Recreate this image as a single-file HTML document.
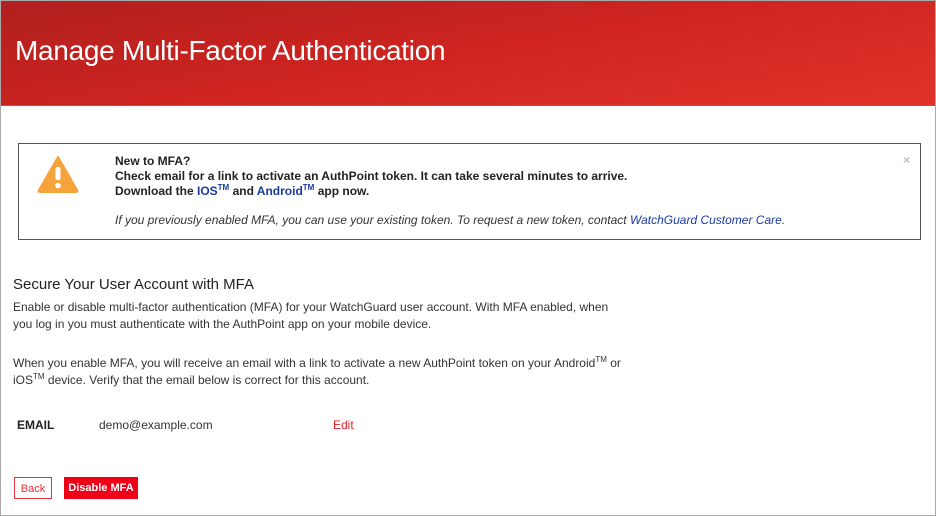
<!DOCTYPE html>
<html><head><style>
body{margin:0;width:936px;height:516px;overflow:hidden;font-family:"Liberation Sans",sans-serif;background:#fff;}
.frame{position:absolute;left:0;top:0;width:934px;height:514px;border:1px solid #aaa;}
.hdr{position:absolute;left:1px;top:1px;width:934px;height:104px;background:linear-gradient(170deg,#b0201e 0%,#cf2420 50%,#e0332a 100%);border-bottom:1px solid #e04040;}
.hdr h1{margin:0;position:absolute;left:14px;top:34px;font-weight:300;font-size:28px;color:#fff;letter-spacing:-0.3px;}
sup{font-size:8px;vertical-align:baseline;position:relative;top:-5px;line-height:0}
.alert{position:absolute;left:18px;top:143px;width:901px;height:95px;border:1px solid #555;}
.alert .t{position:absolute;left:96px;top:10px;font-size:12px;font-weight:bold;color:#222;line-height:15px;}
.alert a{color:#1a3aa0;font-weight:bold;text-decoration:none}
.alert .i{position:absolute;left:96px;top:69px;font-size:12px;font-style:italic;color:#333;}
.alert .i a{font-weight:normal;color:#1a3aa0}
.x{position:absolute;right:10px;top:9px;color:#bbb;font-size:12px;font-weight:bold}
h2{position:absolute;left:13px;top:276px;margin:0;font-size:15px;font-weight:normal;color:#222}
p{position:absolute;left:13px;margin:0;font-size:12px;line-height:17px;color:#333;width:610px}
.btn{position:absolute;top:477px;height:22px;font-size:11px;line-height:22px;text-align:center;box-sizing:border-box}
</style></head><body>
<div class="frame"></div>
<div class="hdr"><h1>Manage Multi-Factor Authentication</h1></div>
<div class="alert">
<svg style="position:absolute;left:18px;top:11px" width="42" height="38" viewBox="0 0 42 38"><path d="M21 2 L40 35 Q41 37 39 37 L3 37 Q1 37 2 35 Z" fill="#f6a33c" stroke="#f6a33c" stroke-width="2" stroke-linejoin="round"/><rect x="18.5" y="12" width="5" height="13" rx="2" fill="#fff"/><circle cx="21" cy="30.5" r="2.8" fill="#fff"/></svg>
<div class="t">New to MFA?<br>Check email for a link to activate an AuthPoint token. It can take several minutes to arrive.<br>Download the <a>IOS<sup>TM</sup></a> and <a>Android<sup>TM</sup></a> app now.</div>
<div class="i">If you previously enabled MFA, you can use your existing token. To request a new token, contact <a>WatchGuard Customer Care</a>.</div>
<div class="x">×</div>
</div>
<h2>Secure Your User Account with MFA</h2>
<p style="top:299px">Enable or disable multi-factor authentication (MFA) for your WatchGuard user account. With MFA enabled, when you log in you must authenticate with the AuthPoint app on your mobile device.</p>
<p style="top:355px;width:625px">When you enable MFA, you will receive an email with a link to activate a new AuthPoint token on your Android<sup>TM</sup> or iOS<sup>TM</sup> device. Verify that the email below is correct for this account.</p>
<div style="position:absolute;left:17px;top:418px;font-size:12px;font-weight:bold;color:#222">EMAIL</div>
<div style="position:absolute;left:99px;top:418px;font-size:12px;color:#333">demo@example.com</div>
<div style="position:absolute;left:333px;top:418px;font-size:12px;color:#e8202a">Edit</div>
<div class="btn" style="left:14px;width:38px;border:1px solid #e8303a;color:#e8303a">Back</div>
<div class="btn" style="left:64px;width:74px;background:#ee0018;color:#fff;font-weight:bold">Disable MFA</div>
</body></html>
